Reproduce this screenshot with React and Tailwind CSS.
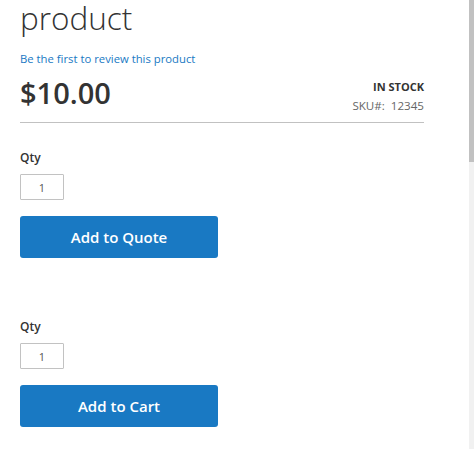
import React from 'react';

function QtyForm({ label }) {
  return (
    <div>
      <div className="text-[12px] leading-4 font-semibold text-[#333]">Qty</div>
      <input
        type="text"
        defaultValue="1"
        className="mt-2 block w-[44px] h-[26px] border border-[#c2c2c2] rounded-[1px] text-center text-[11px] text-[#555] bg-white outline-none"
      />
      <button className="mt-4 block w-[198px] h-[42px] bg-[#1979c3] rounded-[3px] text-white text-[15px] font-semibold">
        {label}
      </button>
    </div>
  );
}

export default function App() {
  return (
    <div
      className="relative w-[474px] h-[449px] overflow-hidden bg-white text-[#333]"
      style={{ fontFamily: '"Open Sans", "Liberation Sans", sans-serif' }}
    >
      <div className="pl-5 w-[424px]">
        <h1 className="text-[31.5px] leading-[36px] font-light">product</h1>
        <a href="#" className="block mt-[15px] text-[11.3px] leading-4 text-[#1979c3]">
          Be the first to review this product
        </a>
        <div className="mt-[10px] flex justify-between items-start">
          <div className="text-[29px] leading-8 font-semibold">$10.00</div>
          <div className="mt-[2px] text-right text-[11px] leading-4">
            <div className="font-bold uppercase">In stock</div>
            <div className="mt-[3px] text-[11.6px] text-[#666]">
              SKU#:&nbsp;&nbsp;12345
            </div>
          </div>
        </div>
        <div className="mt-2 h-px bg-[#c1c1c1]" />
        <div className="mt-[27px]">
          <QtyForm label="Add to Quote" />
        </div>
        <div className="mt-[61px]">
          <QtyForm label="Add to Cart" />
        </div>
      </div>
      <div className="absolute top-0 right-0 w-[5px] h-full bg-[#f1f1f1]">
        <div className="h-[162px] bg-[#c1c1c1]" />
      </div>
    </div>
  );
}
